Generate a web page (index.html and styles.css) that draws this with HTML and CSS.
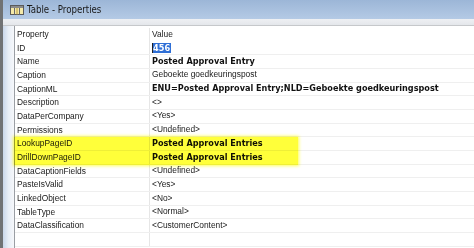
FILE: index.html
```html
<!DOCTYPE html>
<html lang="en">
<head>
    <meta charset="UTF-8">
    <title>Table - Properties</title>
    <link rel="stylesheet" href="styles.css">
</head>
<body>
    <div class="screen">
        <div class="edge"></div>
        <div class="window">
            <!-- Title bar -->
            <div class="titlebar">
                <svg class="title-icon" width="14" height="10" viewBox="0 0 14 10">
                    <rect x="0.5" y="0.5" width="13" height="9" fill="#f4e9a8" stroke="#5a5a5a"/>
                    <rect x="1" y="1" width="12" height="2" fill="#8a8a8a"/>
                    <line x1="4.5" y1="3" x2="4.5" y2="9.5" stroke="#6a6a6a"/>
                    <line x1="7" y1="3" x2="7" y2="9.5" stroke="#b89a3a"/>
                    <line x1="9.5" y1="3" x2="9.5" y2="9.5" stroke="#6a6a6a"/>
                </svg>
                <span class="title-text">Table - Properties</span>
            </div>
            <div class="toolbar"></div>

            <!-- Property grid -->
            <div class="content">
                <div class="side"></div>
                <div class="grid">
                    <div class="row head">
                        <div class="cell name">Property</div>
                        <div class="cell value">Value</div>
                    </div>
                    <div class="row">
                        <div class="cell name">ID</div>
                        <div class="cell value"><span class="caret"></span><span class="selected">456</span></div>
                    </div>
                    <div class="row">
                        <div class="cell name">Name</div>
                        <div class="cell value bold">Posted Approval Entry</div>
                    </div>
                    <div class="row">
                        <div class="cell name">Caption</div>
                        <div class="cell value">Geboekte goedkeuringspost</div>
                    </div>
                    <div class="row">
                        <div class="cell name">CaptionML</div>
                        <div class="cell value bold">ENU=Posted Approval Entry;NLD=Geboekte goedkeuringspost</div>
                    </div>
                    <div class="row">
                        <div class="cell name">Description</div>
                        <div class="cell value">&lt;&gt;</div>
                    </div>
                    <div class="row">
                        <div class="cell name">DataPerCompany</div>
                        <div class="cell value">&lt;Yes&gt;</div>
                    </div>
                    <div class="row">
                        <div class="cell name">Permissions</div>
                        <div class="cell value">&lt;Undefined&gt;</div>
                    </div>
                    <div class="row">
                        <div class="cell name">LookupPageID</div>
                        <div class="cell value bold">Posted Approval Entries</div>
                    </div>
                    <div class="row">
                        <div class="cell name">DrillDownPageID</div>
                        <div class="cell value bold">Posted Approval Entries</div>
                    </div>
                    <div class="row">
                        <div class="cell name">DataCaptionFields</div>
                        <div class="cell value">&lt;Undefined&gt;</div>
                    </div>
                    <div class="row">
                        <div class="cell name">PasteIsValid</div>
                        <div class="cell value">&lt;Yes&gt;</div>
                    </div>
                    <div class="row">
                        <div class="cell name">LinkedObject</div>
                        <div class="cell value">&lt;No&gt;</div>
                    </div>
                    <div class="row">
                        <div class="cell name">TableType</div>
                        <div class="cell value">&lt;Normal&gt;</div>
                    </div>
                    <div class="row">
                        <div class="cell name">DataClassification</div>
                        <div class="cell value">&lt;CustomerContent&gt;</div>
                    </div>
                    <div class="row">
                        <div class="cell name"></div>
                        <div class="cell value"></div>
                    </div>

                    <!-- highlighter mark over the two page rows -->
                    <div class="marker"></div>
                </div>
            </div>
        </div>
    </div>
</body>
</html>
```

FILE: styles.css
```css
body {
    margin: 0;
    padding: 0;
    background-color: #ffffff;
    font-family: "Liberation Sans", Arial, sans-serif;
    color: #1a1a1a;
    overflow: hidden;
}
.screen {
    display: flex;
    width: 474px;
    height: 248px;
    overflow: hidden;
}
.edge {
    width: 3px;
    background-color: #707274;
}
.window {
    flex: 1;
    display: flex;
    flex-direction: column;
}
/* Title bar */
.titlebar {
    height: 19px;
    flex-shrink: 0;
    display: flex;
    align-items: center;
    gap: 3px;
    padding-left: 7px;
    background: linear-gradient(#9cb6d7, #b4cae5);
}
.title-icon {
    display: block;
}
.title-text {
    font-family: "DejaVu Sans Condensed", "DejaVu Sans", sans-serif;
    font-size: 9.6px;
    color: #1a1a1a;
}
.toolbar {
    height: 6px;
    flex-shrink: 0;
    background: linear-gradient(#eef0f3, #e4e7eb);
    border-bottom: 1px solid #c6c8cb;
}
/* Property grid */
.content {
    flex: 1;
    display: flex;
}
.side {
    width: 11px;
    background: linear-gradient(to right, #c9d7ea, #e8eef6 50%, #f6f8fb);
    border-right: 1px solid #9a9ea4;
}
.grid {
    flex: 1;
    position: relative;
}
.row {
    display: flex;
    height: 13.7px;
    border-bottom: 1px solid #efefef;
    box-sizing: border-box;
}
.row.head {
    height: 15.5px;
    border-bottom: none;
    padding-top: 2px;
}
.cell {
    font-size: 8.4px;
    line-height: 13.7px;
    white-space: nowrap;
}
.cell.name {
    width: 132px;
    padding-left: 2px;
    border-right: 1px solid #e6e6e6;
    overflow: hidden;
}
.cell.value {
    flex: 1;
    padding-left: 2px;
    display: flex;
    align-items: center;
    height: 12.7px;
}
.cell.bold {
    font-family: "DejaVu Sans", sans-serif;
    font-weight: bold;
    font-size: 8.15px;
    color: #111;
}
.caret {
    width: 1px;
    height: 10px;
    background-color: #222;
}
.selected {
    background-color: #2f6fd6;
    color: #ffffff;
    font-family: "DejaVu Sans", sans-serif;
    font-weight: bold;
    font-size: 8.2px;
    line-height: 10px;
    padding-right: 1px;
}
.marker {
    position: absolute;
    left: -1px;
    top: 111px;
    width: 284px;
    height: 28px;
    background-color: #ffff3a;
    box-shadow: 0 0 3px 1px #ffff5a;
    mix-blend-mode: multiply;
    pointer-events: none;
}
```
